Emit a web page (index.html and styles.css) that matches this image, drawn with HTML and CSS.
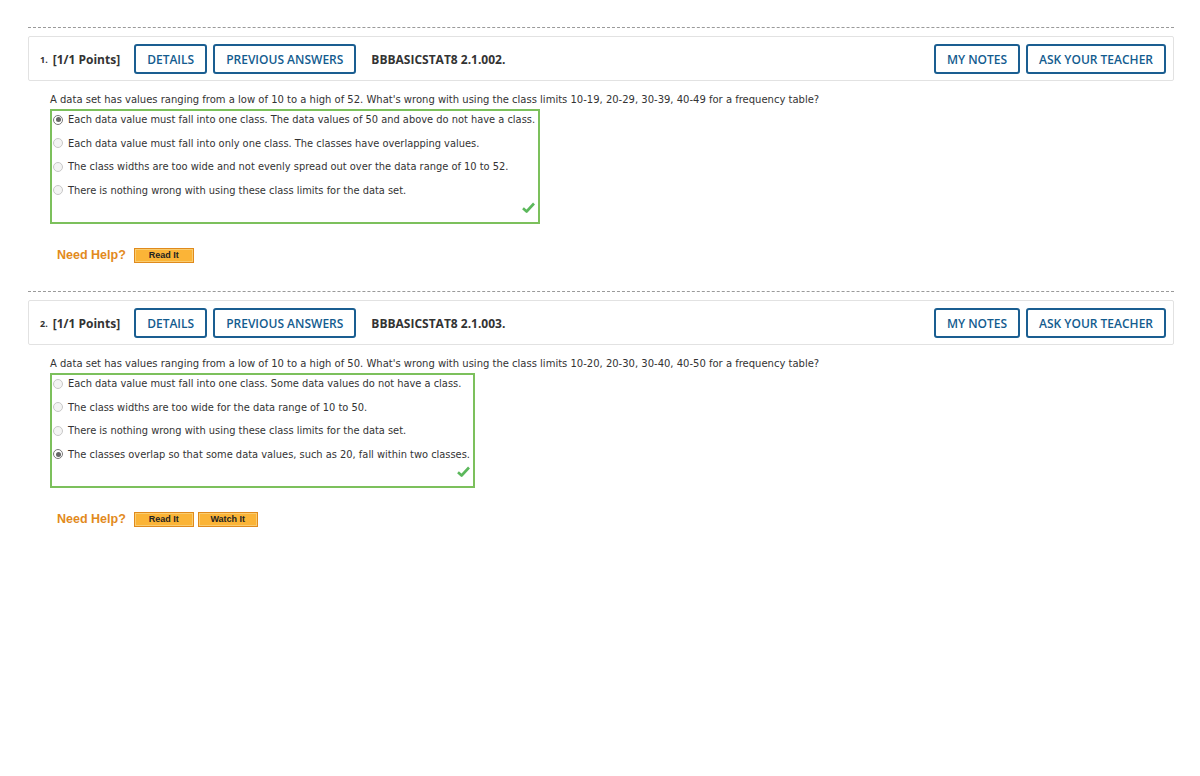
FILE: index.html
```html
<!DOCTYPE html>
<html>
<head>
<meta charset="utf-8">
<link rel="stylesheet" href="styles.css">
</head>
<body>
<div class="page">
  <section class="q">
    <div class="rule"></div>
    <div class="qhead">
      <span class="num">1.</span>
      <span class="pts">[1/1 Points]</span>
      <button class="btn">DETAILS</button>
      <button class="btn">PREVIOUS ANSWERS</button>
      <span class="code">BBBASICSTAT8 2.1.002.</span>
      <span class="spacer"></span>
      <button class="btn notes">MY NOTES</button>
      <button class="btn last">ASK YOUR TEACHER</button>
    </div>
    <div class="body">
      <p class="prompt">A data set has values ranging from a low of 10 to a high of 52. What's wrong with using the class limits 10-19, 20-29, 30-39, 40-49 for a frequency table?</p>
      <div class="answers">
        <div class="opt"><span class="radio on"></span>Each data value must fall into one class. The data values of 50 and above do not have a class.</div>
        <div class="opt"><span class="radio"></span>Each data value must fall into only one class. The classes have overlapping values.</div>
        <div class="opt"><span class="radio"></span>The class widths are too wide and not evenly spread out over the data range of 10 to 52.</div>
        <div class="opt"><span class="radio"></span>There is nothing wrong with using these class limits for the data set.</div>
        <div class="check"><svg width="13" height="11" viewBox="0 0 13 11"><path d="M1 6.2 L4.6 9.5 L12 1.5" fill="none" stroke="#5cb85c" stroke-width="2.6" stroke-linejoin="round"/></svg></div>
      </div>
      <div class="help">
        <span class="need">Need Help?</span>
        <span class="hb">Read It</span>
      </div>
    </div>
  </section>
  <section class="q">
    <div class="rule"></div>
    <div class="qhead">
      <span class="num">2.</span>
      <span class="pts">[1/1 Points]</span>
      <button class="btn">DETAILS</button>
      <button class="btn">PREVIOUS ANSWERS</button>
      <span class="code">BBBASICSTAT8 2.1.003.</span>
      <span class="spacer"></span>
      <button class="btn notes">MY NOTES</button>
      <button class="btn last">ASK YOUR TEACHER</button>
    </div>
    <div class="body">
      <p class="prompt">A data set has values ranging from a low of 10 to a high of 50. What's wrong with using the class limits 10-20, 20-30, 30-40, 40-50 for a frequency table?</p>
      <div class="answers">
        <div class="opt"><span class="radio"></span>Each data value must fall into one class. Some data values do not have a class.</div>
        <div class="opt"><span class="radio"></span>The class widths are too wide for the data range of 10 to 50.</div>
        <div class="opt"><span class="radio"></span>There is nothing wrong with using these class limits for the data set.</div>
        <div class="opt"><span class="radio on"></span>The classes overlap so that some data values, such as 20, fall within two classes.</div>
        <div class="check"><svg width="13" height="11" viewBox="0 0 13 11"><path d="M1 6.2 L4.6 9.5 L12 1.5" fill="none" stroke="#5cb85c" stroke-width="2.6" stroke-linejoin="round"/></svg></div>
      </div>
      <div class="help">
        <span class="need">Need Help?</span>
        <span class="hb">Read It</span>
        <span class="hb">Watch It</span>
      </div>
    </div>
  </section>
</div>
</body>
</html>
```
FILE: styles.css
```css
html, body { margin: 0; padding: 0; background: #fff; }
body { font-family: "Open Sans", "DejaVu Sans", sans-serif; color: #333; }
.page { padding: 27px 26px 0 28px; }
.q { height: 264px; }
.rule { border-top: 1px dashed #9a9a9a; height: 0; margin-bottom: 8px; }
.qhead {
  display: flex; align-items: center;
  height: 42px; border: 1px solid #e2e2e2; border-radius: 2px;
  padding: 1px 7px 0 11px;
}
.num { font-size: 9px; font-weight: 700; color: #333; margin-right: 5px; }
.pts { font-size: 12px; font-weight: 700; color: #333; margin-right: 14px; }
.btn {
  font-family: "Open Sans", sans-serif; font-size: 12px; font-weight: 600;
  color: #135c8f; background: #fff; border: 2px solid #1a5e91; border-radius: 3px;
  height: 30px; padding: 0 11px; margin-right: 6px; cursor: pointer;
}
.btn.notes { width: 86px; padding: 0; }
.btn.last { margin-right: 0; }
.code { font-size: 12px; font-weight: 700; color: #333; margin-left: 9px; }
.spacer { flex: 1; }
.body { padding: 12px 0 0 22px; }
.prompt {
  margin: 0 0 2px 0;
  font-family: "DejaVu Sans", Verdana, sans-serif; font-size: 10px; color: #333; line-height: 14px;
}
.answers {
  display: inline-block; position: relative;
  border: 2px solid #7cc05c; padding: 0 3px 23px 1px;
}
.opt {
  display: flex; align-items: center; height: 17px; margin-bottom: 6.5px;
  font-family: "DejaVu Sans", Verdana, sans-serif; font-size: 9.87px; color: #333;
}
.opt:nth-last-child(2) { margin-bottom: 0; }
.radio {
  width: 10px; height: 10px; border-radius: 50%; border: 1px solid #c8c8c8; background: #f4f4f4;
  margin-right: 5px; box-sizing: border-box; position: relative;
}
.radio.on { border: 1px solid #777; background: #fff; }
.radio.on::after {
  content: ""; position: absolute; left: 1.5px; top: 1.5px; width: 5px; height: 5px; border-radius: 50%; background: #666;
}
.check { position: absolute; right: 3px; bottom: 4px; }
.help { display: flex; align-items: center; margin-top: 24px; padding-left: 7px; }
.need {
  font-family: "Liberation Sans", Arial, sans-serif; font-weight: 700; font-size: 12.5px; color: #e28a1c;
  margin-right: 8px;
}
.hb {
  display: inline-block; font-family: "Liberation Sans", Arial, sans-serif; font-weight: 700; font-size: 9px;
  color: #222; background: #fbb437; border: 1px solid #e08a1c; box-shadow: inset 0 0 0 1px #f9cc70;
  width: 58px; height: 13px; line-height: 13px; text-align: center; margin-right: 4px;
}
```
